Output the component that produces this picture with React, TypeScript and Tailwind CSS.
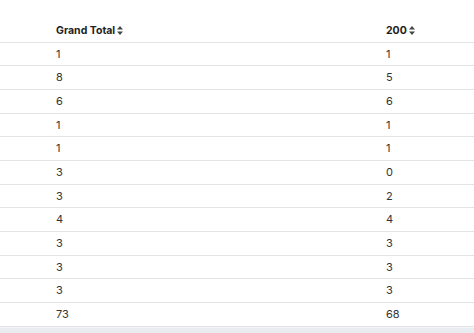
import React from "react";

const rows = [
  ["1", "1"],
  ["8", "5"],
  ["6", "6"],
  ["1", "1"],
  ["1", "1"],
  ["3", "0"],
  ["3", "2"],
  ["4", "4"],
  ["3", "3"],
  ["3", "3"],
  ["3", "3"],
  ["73", "68"],
];

function SortIcon() {
  return (
    <svg width="6" height="9" viewBox="0 0 6 9" className="ml-[2px] inline-block" fill="#444">
      <path d="M3 0 L6 3.6 L0 3.6 Z" />
      <path d="M3 9 L6 5.4 L0 5.4 Z" />
    </svg>
  );
}

export default function App() {
  return (
    <div className="w-[474px] h-[333px] bg-white overflow-hidden flex flex-col font-['Inter',sans-serif] text-[11px] text-[#333]">
      <div className="h-[20px]" />
      <table className="w-full border-collapse">
        <thead>
          <tr className="h-[22px] border-b border-[#e2e4e8]">
            <th className="w-[48px]" />
            <th className="w-[330px] px-[8px] text-left text-[10.5px] font-bold text-[#222]">
              <span className="inline-flex items-center">Grand Total<SortIcon /></span>
            </th>
            <th className="px-[8px] text-left text-[10.5px] font-bold text-[#222]">
              <span className="inline-flex items-center">200<SortIcon /></span>
            </th>
          </tr>
        </thead>
        <tbody>
          {rows.map((r, i) => (
            <tr key={i} className="h-[23.7px] border-b border-[#e2e4e8]">
              <td />
              <td className="px-[8px]">{r[0]}</td>
              <td className="px-[8px]">{r[1]}</td>
            </tr>
          ))}
        </tbody>
      </table>
      <div className="flex-1 border-t border-[#f3f4f6] bg-[#e9ecf0]" />
    </div>
  );
}
